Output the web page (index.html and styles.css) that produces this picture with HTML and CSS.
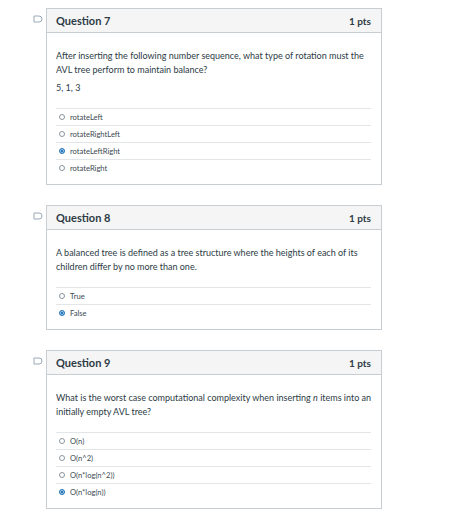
FILE: index.html
```html
<!DOCTYPE html>
<html>
<head>
<meta charset="utf-8">
<link rel="stylesheet" href="styles.css">
</head>
<body>
<div class="page">
  <div class="qwrap">
    <svg class="flag" width="10" height="8" viewBox="0 0 10 8"><path d="M1 1 H6 Q9 1 9 4 Q9 7 6 7 H1 Z" fill="none" stroke="#9aa9b8" stroke-width="1"/></svg>
    <div class="card">
      <div class="head"><span>Question 7</span><span>1 pts</span></div>
      <div class="body">
        <p class="text">After inserting the following number sequence, what type of rotation must the AVL tree perform to maintain balance?</p>
        <p class="text seq">5, 1, 3</p>
        <div class="answers">
          <div class="ans"><span class="radio"></span>rotateLeft</div>
          <div class="ans"><span class="radio"></span>rotateRightLeft</div>
          <div class="ans"><span class="radio on"></span>rotateLeftRight</div>
          <div class="ans"><span class="radio"></span>rotateRight</div>
        </div>
      </div>
    </div>
  </div>

  <div class="qwrap">
    <svg class="flag" width="10" height="8" viewBox="0 0 10 8"><path d="M1 1 H6 Q9 1 9 4 Q9 7 6 7 H1 Z" fill="none" stroke="#9aa9b8" stroke-width="1"/></svg>
    <div class="card">
      <div class="head"><span>Question 8</span><span>1 pts</span></div>
      <div class="body">
        <p class="text">A balanced tree is defined as a tree structure where the heights of each of its children differ by no more than one.</p>
        <div class="answers">
          <div class="ans"><span class="radio"></span>True</div>
          <div class="ans"><span class="radio on"></span>False</div>
        </div>
      </div>
    </div>
  </div>

  <div class="qwrap">
    <svg class="flag" width="10" height="8" viewBox="0 0 10 8"><path d="M1 1 H6 Q9 1 9 4 Q9 7 6 7 H1 Z" fill="none" stroke="#9aa9b8" stroke-width="1"/></svg>
    <div class="card">
      <div class="head"><span>Question 9</span><span>1 pts</span></div>
      <div class="body">
        <p class="text">What is the worst case computational complexity when inserting <i>n</i> items into an initially empty AVL tree?</p>
        <div class="answers">
          <div class="ans"><span class="radio"></span>O(n)</div>
          <div class="ans"><span class="radio"></span>O(n^2)</div>
          <div class="ans"><span class="radio"></span>O(n*log(n^2))</div>
          <div class="ans"><span class="radio on"></span>O(n*log(n))</div>
        </div>
      </div>
    </div>
  </div>
</div>
</body>
</html>
```

FILE: styles.css
```css
html, body {
  margin: 0;
  padding: 0;
  background: #ffffff;
}
body {
  font-family: Lato, "Liberation Sans", sans-serif;
  color: #2d3b45;
}
.page {
  display: flex;
  flex-direction: column;
  gap: 20px;
  padding-top: 8px;
}
.qwrap {
  display: flex;
  align-items: flex-start;
  padding-left: 33px;
}
.flag {
  margin-top: 7px;
  width: 10px;
  height: 8px;
  flex: none;
}
.card {
  margin-left: 3px;
  width: 334px;
  border: 1px solid #c7cdd1;
  background: #fff;
}
.head {
  height: 23px;
  background: #f5f5f5;
  border-bottom: 1px solid #c7cdd1;
  display: flex;
  justify-content: space-between;
  align-items: center;
  padding: 0 10px 0 9px;
  font-weight: bold;
  font-size: 11px;
}
.head span:last-child {
  font-size: 10px;
}
.body {
  padding: 16px 4px 8px 9px;
}
.text {
  margin: 0;
  font-size: 9px;
  line-height: 14px;
}
.seq {
  margin-top: 4px;
}
.answers {
  margin-top: 13px;
  margin-right: 6px;
}
.ans {
  height: 16px;
  border-top: 1px solid #e3e6e8;
  display: flex;
  align-items: center;
  font-size: 7.6px;
  color: #3d4a52;
}
.radio {
  width: 4px;
  height: 4px;
  border: 1px solid #8d959b;
  border-radius: 50%;
  margin: 0 5px 0 3px;
  flex: none;
}
.radio.on {
  border-color: #2b7abc;
  background: #2b7abc;
  box-shadow: inset 0 0 0 0.5px #fff;
}
```
